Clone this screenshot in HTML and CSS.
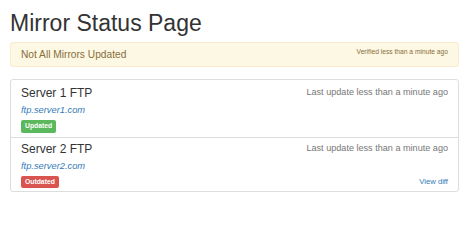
FILE: index.html
```html
<!DOCTYPE html>
<html>
<head>
<meta charset="utf-8">
<title>Mirror Status Page</title>
<link rel="stylesheet" href="styles.css">
</head>
<body>
<div class="container">
  <h1 class="title">Mirror Status Page</h1>
  <div class="alert">
    <span class="alert-text">Not All Mirrors Updated</span>
    <span class="alert-time">Verified less than a minute ago</span>
  </div>
  <div class="list">
    <div class="item">
      <div class="item-main">
        <div class="item-name">Server 1 FTP</div>
        <a class="item-link" href="#">ftp.server1.com</a>
        <span class="badge badge-ok">Updated</span>
      </div>
      <div class="item-side">
        <span class="item-time">Last update less than a minute ago</span>
      </div>
    </div>
    <div class="item">
      <div class="item-main">
        <div class="item-name">Server 2 FTP</div>
        <a class="item-link" href="#">ftp.server2.com</a>
        <span class="badge badge-bad">Outdated</span>
      </div>
      <div class="item-side">
        <span class="item-time">Last update less than a minute ago</span>
        <a class="diff-link" href="#">View diff</a>
      </div>
    </div>
  </div>
</div>
</body>
</html>
```

FILE: styles.css
```css
html, body {
  margin: 0;
  padding: 0;
  background: #ffffff;
}
body {
  font-family: "Liberation Sans", Arial, sans-serif;
  color: #333333;
}
.container {
  width: 449px;
  padding-left: 10px;
}
.title {
  margin: 0;
  padding-top: 8px;
  font-size: 23px;
  font-weight: 400;
  line-height: 30px;
  color: #333333;
}
.alert {
  margin-top: 4px;
  height: 23px;
  display: flex;
  align-items: center;
  justify-content: space-between;
  padding: 0 10px;
  background: #fcf8e3;
  border: 1px solid #faebcc;
  border-radius: 3px;
  color: #8a6d3b;
}
.alert-text {
  font-size: 10.2px;
}
.alert-time {
  font-size: 6.7px;
  align-self: flex-start;
  margin-top: 5px;
}
.list {
  margin-top: 12px;
  border: 1px solid #dddddd;
  border-radius: 3px;
}
.item {
  display: flex;
  justify-content: space-between;
  padding: 5px 10px 4px 10px;
}
.item + .item {
  border-top: 1px solid #dddddd;
  padding-top: 3px;
  padding-bottom: 3px;
}
.item-main {
  display: flex;
  flex-direction: column;
  align-items: flex-start;
}
.item-name {
  font-size: 12px;
  line-height: 16px;
}
.item-link {
  margin-top: 2px;
  font-size: 9.3px;
  line-height: 14px;
  font-style: italic;
  color: #337ab7;
  text-decoration: none;
}
.badge {
  margin-top: 3px;
  padding: 0 4px;
  height: 12.5px;
  line-height: 12.5px;
  font-size: 6.8px;
  font-weight: 700;
  color: #ffffff;
  border-radius: 2px;
}
.badge-ok {
  background: #5cb85c;
}
.badge-bad {
  background: #d9534f;
}
.item-side {
  display: flex;
  flex-direction: column;
  align-items: flex-end;
  justify-content: space-between;
}
.item-time {
  font-size: 9.1px;
  line-height: 12px;
  margin-top: 1px;
  color: #777777;
}
.diff-link {
  font-size: 7.7px;
  line-height: 12px;
  color: #337ab7;
  text-decoration: none;
}
```
